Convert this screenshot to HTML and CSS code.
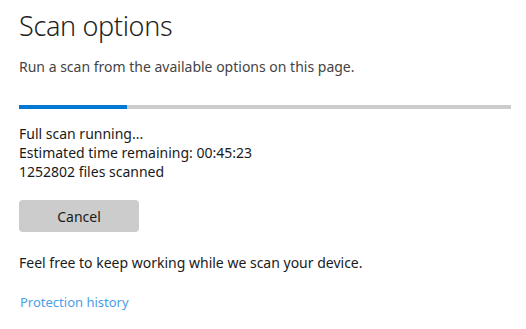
FILE: index.html
```html
<!DOCTYPE html>
<html lang="en">
<head>
<meta charset="utf-8">
<title>Scan options</title>
<link rel="stylesheet" href="styles.css">
</head>
<body>
<main class="page">
  <h1 class="title">Scan options</h1>
  <p class="subtitle">Run a scan from the available options on this page.</p>
  <div class="progress"><div class="progress-fill" style="width: 22%"></div></div>
  <div class="status">
    <div>Full scan running...</div>
    <div>Estimated time remaining: 00:45:23</div>
    <div>1252802 files scanned</div>
  </div>
  <button class="cancel" type="button">Cancel</button>
  <p class="note">Feel free to keep working while we scan your device.</p>
  <a class="link" href="#">Protection history</a>
</main>
</body>
</html>
```
FILE: styles.css
```css
html, body {
  margin: 0;
  padding: 0;
  background: #ffffff;
}
body {
  font-family: "Noto Sans", "Open Sans", sans-serif;
  color: #1a1a1a;
}
.page {
  display: flex;
  flex-direction: column;
  align-items: flex-start;
  padding: 7px 15px 0 19px;
}
.title {
  margin: 0;
  font-size: 27px;
  font-weight: 300;
  letter-spacing: -0.35px;
  line-height: 38px;
  color: #1f1f1f;
}
.subtitle {
  margin: 12px 0 0;
  font-size: 14px;
  line-height: 20px;
  color: #444444;
}
.progress {
  align-self: stretch;
  height: 4px;
  margin-top: 28px;
  background: #cccccc;
}
.progress-fill {
  height: 100%;
  background: #0078d4;
}
.status {
  margin-top: 15px;
  font-size: 14px;
  line-height: 19px;
  color: #1a1a1a;
}
.cancel {
  margin-top: 19px;
  width: 120px;
  height: 32px;
  border: none;
  border-radius: 4px;
  background: #cccccc;
  font-family: inherit;
  font-size: 14px;
  color: #1a1a1a;
  padding: 0;
}
.note {
  margin: 21px 0 0;
  font-size: 14px;
  line-height: 20px;
  color: #1a1a1a;
}
.link {
  margin-top: 20px;
  margin-left: 1px;
  font-size: 13px;
  line-height: 18px;
  color: #4a9fe8;
  text-decoration: none;
}
```
